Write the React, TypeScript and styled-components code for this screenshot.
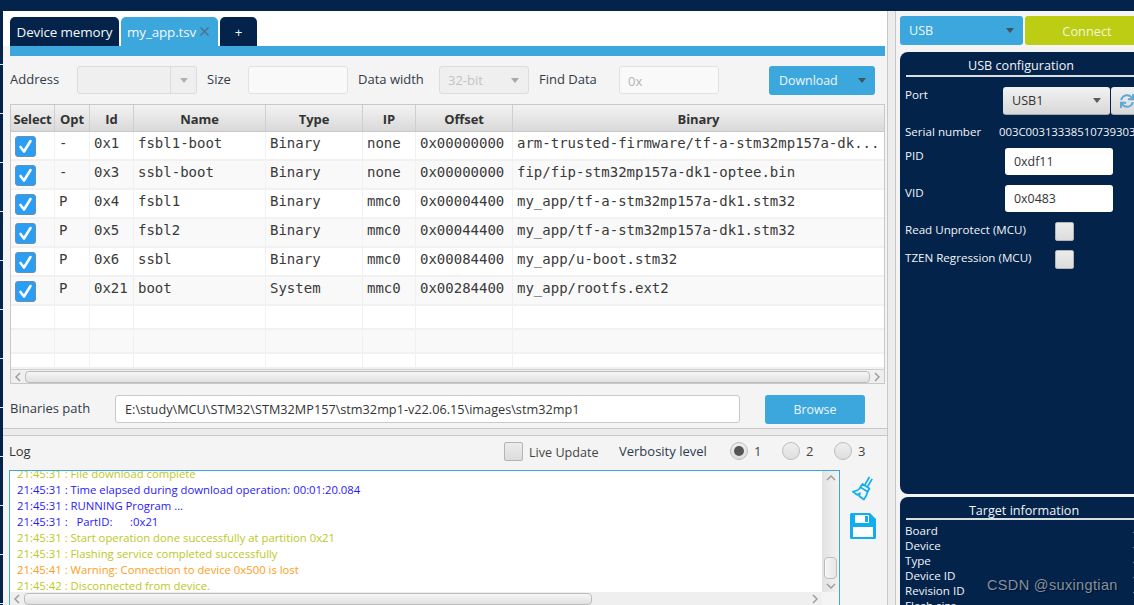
import React from "react";
import styled, { createGlobalStyle } from "styled-components";
import { FaSync } from "react-icons/fa";

const NAVY = "#03234b";
const BLUE = "#3ba7dc";
const UI = `"Open Sans", "Noto Sans", sans-serif`;
const MONO = `"DejaVu Sans Mono", "Liberation Mono", monospace`;

const Global = createGlobalStyle`
  html, body { margin: 0; padding: 0; overflow: hidden; background: ${NAVY}; }
  * { box-sizing: border-box; }
`;

const Root = styled.div`
  width: 1134px; height: 605px; overflow: hidden; position: relative;
  display: flex; flex-direction: column; background: ${NAVY};
  font-family: ${UI}; font-size: 13px; color: #333;
`;
const TopBar = styled.div`height: 11px; flex: none; background: ${NAVY};`;
const Body = styled.div`flex: 1; min-height: 0; display: flex;`;
const LeftStrip = styled.div`
  width: 3px; flex: none;
  background: repeating-linear-gradient(to bottom, ${NAVY} 0 48px, #dfe6ee 48px 49px);
  background-position: 0 5px;
`;
const Main = styled.div`
  width: 884px; flex: none; display: flex; flex-direction: column;
  background: #f4f4f4; overflow: hidden;
`;
const TabHeader = styled.div`
  height: 35px; flex: none; background: #fff; padding: 6px 0 0 7px;
  display: flex; gap: 2px; align-items: flex-end;
`;
const Tab = styled.div<{ $w: number; $active?: boolean }>`
  width: ${(p) => p.$w}px; height: 29px; border-radius: 5px 5px 0 0;
  background: ${(p) => (p.$active ? BLUE : NAVY)}; color: #f4f8fb;
  font-size: 13.4px; display: flex; align-items: center; justify-content: ${(p) => (p.$active ? "flex-start" : "center")};
  padding-left: ${(p) => (p.$active ? 6 : 0)}px; gap: 3px; letter-spacing: -0.1px;
`;
const BlueBar = styled.div`height: 10px; flex: none; margin: 0 2px 0 7px; background: ${BLUE};`;
const Controls = styled.div`
  height: 29px; flex: none; margin: 10px 0 0 7px; display: flex; align-items: flex-start;
`;
const Label = styled.span<{ $w: number }>`
  width: ${(p) => p.$w}px; flex: none; height: 27px; line-height: 26px; font-size: 13px; color: #333a45;
`;
const Combo = styled.div<{ $w: number; $mr: number }>`
  width: ${(p) => p.$w}px; height: 28px; margin-right: ${(p) => p.$mr}px; flex: none;
  border: 1px solid #dcdcdc; border-radius: 3px; background: #efefef; color: #c4c4c4;
  display: flex; align-items: center; justify-content: space-between; padding-left: 8px; font-size: 13px;
`;
const ArrowCell = styled.div<{ $line?: boolean }>`
  width: 26px; height: 100%; display: flex; align-items: center; justify-content: center;
  border-left: ${(p) => (p.$line ? "1px solid #dcdcdc" : "none")};
`;
const Arrow = styled.i<{ $c: string }>`
  display: block; width: 0; height: 0; border-left: 4.5px solid transparent; border-right: 4.5px solid transparent;
  border-top: 5px solid ${(p) => p.$c};
`;
const Input = styled.div<{ $w: number; $mr: number }>`
  width: ${(p) => p.$w}px; height: 28px; margin-right: ${(p) => p.$mr}px; flex: none;
  background: #f9f9f9; border: 1px solid #e2e2e2; border-radius: 3px; padding-left: 8px;
  line-height: 28px; color: #b4b4b4; font-size: 13px;
`;
const BlueButton = styled.div<{ $w: number }>`
  width: ${(p) => p.$w}px; height: 29px; flex: none; background: ${BLUE}; color: #eef7fc; border-radius: 3px;
  display: flex; align-items: center; font-size: 12.4px;
`;
const DownloadText = styled.span`flex: 1; padding-left: 10px;`;
const Table = styled.div`
  height: 280px; flex: none; margin: 9px 2px 0 7px; border: 1px solid #c8c8c8;
  display: flex; flex-direction: column; background: #fff; overflow: hidden;
`;
const COLS = "43px 34px 43px 131px 96px 52px 96px 371px";
const HeadRow = styled.div`
  height: 27px; flex: none; display: grid; grid-template-columns: ${COLS}; column-gap: 1px;
  border-bottom: 1px solid #c8c8c8; background: #cfcfcf;
`;
const HeadCell = styled.div`
  background: linear-gradient(#f3f3f3, #d9d9d9); display: flex; align-items: center; justify-content: center;
  font-weight: 700; font-size: 13px; color: #333; letter-spacing: -0.1px; padding-top: 2px;
`;
const Row = styled.div<{ $h: number; $alt?: boolean }>`
  height: ${(p) => p.$h}px; flex: none; display: grid; grid-template-columns: ${COLS}; column-gap: 1px;
  background: ${(p) => (p.$alt ? "#f9f9f9" : "#fff")}; border-bottom: 2px solid #f1f1f1;
`;
const Cell = styled.div`
  border-right: 1px solid #f1f1f1; margin-right: -1px; padding: 0 4px; font-family: ${MONO}; font-size: 14px;
  line-height: 22px; color: #3a3a3a; white-space: nowrap; overflow: hidden;
`;
const CheckCell = styled.div`
  border-right: 1px solid #f1f1f1; margin-right: -1px; padding: 4px 0 0 4px;
`;
const Check = styled.div`
  width: 21px; height: 21px; border-radius: 3px; background: #2a9df4; border: 1px solid #6b90ac;
  display: flex; align-items: center; justify-content: center;
`;
const HScroll = styled.div`
  height: 15px; flex: none; background: #efefef; border-top: 1px solid #d0d0d0; display: flex; align-items: center;
`;
const ScrollEnd = styled.div`
  width: 14px; flex: none; display: flex; align-items: center; justify-content: center; color: #9a9a9a;
`;
const HThumb = styled.div<{ $w?: number }>`
  ${(p) => (p.$w ? `width: ${p.$w}px; flex: none;` : "flex: 1;")} height: 12px; border: 1px solid #bdbdbd; border-radius: 4px;
  background: linear-gradient(#f6f6f6, #e0e0e0);
`;
const PathRow = styled.div`
  height: 29px; flex: none; margin: 11px 0 0 7px; display: flex; align-items: flex-start;
`;
const PathInput = styled.div`
  width: 625px; height: 28px; flex: none; margin-right: 25px; background: #fff; border: 1px solid #c9c9c9; border-radius: 3px;
  padding-left: 9px; line-height: 27px; font-size: 12.7px; color: #333; white-space: nowrap; overflow: hidden;
`;
const BrowseButton = styled(BlueButton)`justify-content: center;`;
const Splitter = styled.div`
  height: 8px; flex: none; margin-top: 4px; background: #ececec; border-top: 1px solid #c8c8c8; border-bottom: 1px solid #c8c8c8;
`;
const LogHeader = styled.div`
  height: 34px; flex: none; display: flex; align-items: center; padding: 0 0 4px 6px; font-size: 13px;
`;
const LogTitle = styled.span`width: 495px; flex: none; color: #333;`;
const SquareBox = styled.div<{ $mr?: number }>`
  width: 19px; height: 19px; flex: none; border: 1px solid #b4b4b4; border-radius: 2px; margin-right: ${(p) => p.$mr ?? 0}px;
  background: linear-gradient(#ececec, #dcdcdc);
`;
const LiveText = styled.span`width: 90px; flex: none; font-size: 12.6px; color: #444; padding-top: 2px;`;
const VerbText = styled.span`width: 111px; flex: none; color: #2c3a4e;`;
const RadioItem = styled.div`width: 52px; flex: none; display: flex; align-items: center; gap: 6px; font-size: 13px; color: #444;`;
const Radio = styled.div`
  width: 18px; height: 18px; border-radius: 50%; border: 1px solid #bcbcbc; background: linear-gradient(#efefef, #dedede);
  display: flex; align-items: center; justify-content: center;
`;
const RadioDot = styled.div`width: 10px; height: 10px; border-radius: 50%; background: #555;`;
const LogBody = styled.div`flex: 1; min-height: 0; display: flex; padding-left: 6px;`;
const LogBox = styled.div`
  width: 831px; flex: none; height: 145px; border: 1px solid ${BLUE}; background: #fff;
  display: grid; grid-template-columns: 1fr 17px; grid-template-rows: 121px 13px;
`;
const LogLines = styled.div`
  overflow: hidden; display: flex; flex-direction: column; justify-content: flex-end; padding-left: 7px;
  font-size: 11.3px; white-space: pre;
`;
const LogLine = styled.div<{ $c: string }>`color: ${(p) => p.$c}; flex: none; height: 16px; line-height: 20px;`;
const VScroll = styled.div`
  background: linear-gradient(to right, #e2e2e2, #f2f2f2); display: flex; flex-direction: column; align-items: center;
`;
const VEnd = styled.div`height: 13px; flex: none; display: flex; align-items: center; justify-content: center; color: #9a9a9a;`;
const VGap = styled.div`flex: 1;`;
const VThumb = styled.div`
  width: 13px; height: 22px; flex: none; border: 1px solid #bdbdbd; border-radius: 4px; background: linear-gradient(to right, #f6f6f6, #e6e6e6);
`;
const LogScroll = styled(HScroll)`height: 13px; grid-column: 1; border-top: none;`;
const CornerFill = styled.div`background: #f4f4f4;`;
const ToolIcons = styled.div`
  width: 40px; flex: none; padding: 6px 0 0 10px; display: flex; flex-direction: column; gap: 12px;
`;
const BroomWrap = styled.div`height: 25px; margin-left: 2px; display: flex;`;
const Divider = styled.div`
  width: 9px; flex: none; background: #ececec; border-left: 1px solid #c8c8c8; border-right: 1px solid #c8c8c8;
`;
const Side = styled.div`
  width: 247px; flex: none; background: #f4f4f4; padding: 5px 0 0 4px; display: flex; flex-direction: column;
`;
const SideTop = styled.div`height: 29px; flex: none; display: flex; gap: 2px;`;
const SideCombo = styled.div`
  width: 123px; flex: none; height: 29px; border-radius: 3px; background: ${BLUE}; color: #eef7fc; padding: 0 9px;
  display: flex; align-items: center; justify-content: space-between; font-size: 12.6px;
`;
const ConnectBtn = styled.div`
  width: 124px; flex: none; height: 29px; border-radius: 3px 0 0 3px; background: #bccd14; color: #f3f6d8; font-size: 12.8px;
  display: flex; align-items: center; justify-content: center;
`;
const Panel = styled.div<{ $w: number; $h: number; $mt: number }>`
  width: ${(p) => p.$w}px; height: ${(p) => p.$h}px; flex: none; margin-top: ${(p) => p.$mt}px;
  background: ${NAVY}; border-radius: 8px 0 0 8px; color: #f1f4f7; padding: 6px 6px 0 6px;
`;
const PanelTitle = styled.div<{ $h: number }>`
  height: ${(p) => p.$h}px; border-bottom: 2px solid #d9dde2; text-align: center; line-height: 16px; font-size: 12.6px;
`;
const Form = styled.div`padding-top: 10px;`;
const FormRow = styled.div<{ $h: number }>`height: ${(p) => p.$h}px; display: flex; align-items: flex-start; white-space: nowrap;`;
const FormLabel = styled.div<{ $w: number }>`
  width: ${(p) => p.$w}px; flex: none; line-height: 16px; font-size: 11.6px; margin-left: -1px;
`;
const PortCombo = styled.div`
  width: 107px; height: 28px; flex: none; border-radius: 3px; background: linear-gradient(#f2f2f2, #d8d8d8); color: #333;
  border-bottom: 1px solid #aaa; display: flex; align-items: center; justify-content: space-between; padding: 0 9px; font-size: 12.6px;
`;
const RefreshBtn = styled.div`
  width: 40px; height: 28px; flex: none; margin-left: 1px; border-radius: 3px; background: linear-gradient(#f2f2f2, #d8d8d8);
  border-bottom: 1px solid #aaa; padding: 7px 0 0 9px; color: #5aa9d6; font-size: 14px; display: flex;
`;
const Serial = styled.span`font-size: 11.4px; line-height: 16px; letter-spacing: -0.05px;`;
const Field = styled.div`
  width: 108px; height: 27px; flex: none; background: #fff; border-radius: 3px; color: #333; padding-left: 9px; line-height: 28px; font-size: 12.4px;
`;
const InfoList = styled.div`padding-top: 3px;`;
const InfoRow = styled.div`
  height: 15px; display: flex; line-height: 15px; font-size: 11.6px; white-space: nowrap; margin-left: -1px;
`;
const InfoLabel = styled.span`width: 228px; flex: none;`;
const Watermark = styled.div`
  position: absolute; left: 987px; top: 577px; font-family: "Liberation Sans", sans-serif; font-size: 14.5px;
  color: #87919f; text-shadow: 1px 1px 1px rgba(0, 0, 0, 0.5); letter-spacing: 0.35px; white-space: nowrap;
`;

const Chevron = ({ d }: { d: "l" | "r" | "u" | "d" }) => {
  const paths = { l: "M6 1 L2 5 L6 9", r: "M2 1 L6 5 L2 9", u: "M1 6 L5 2 L9 6", d: "M1 2 L5 6 L9 2" };
  const vertical = d === "u" || d === "d";
  return (
    <svg width={vertical ? 10 : 8} height={vertical ? 8 : 10} viewBox={vertical ? "0 0 10 8" : "0 0 8 10"} fill="none" stroke="currentColor" strokeWidth="1.4">
      <path d={paths[d]} />
    </svg>
  );
};

const Tick = () => (
  <svg width="15" height="15" viewBox="0 0 15 15" fill="none" stroke="#fff" strokeWidth="2.6" strokeLinecap="round" strokeLinejoin="round">
    <path d="M2.5 8 L6 12.5 L12.5 2" />
  </svg>
);

const CloseX = () => (
  <svg width="11" height="11" viewBox="0 0 11 11" fill="none" stroke="#4f6f84" strokeWidth="1.3">
    <path d="M1.5 1.5 L9.5 9.5 M9.5 1.5 L1.5 9.5" />
  </svg>
);

const Broom = () => (
  <svg width="22" height="25" viewBox="0 0 24 26" fill="none" stroke="#10aef0" strokeWidth="1.9" strokeLinejoin="round">
    <path d="M19 0.5 L14 9 M22 2.5 L17 11" />
    <path d="M11.5 8 L19 13 L17 16.5 L9 11.5 Z" />
    <path d="M9.5 11.5 C8 14 4 16 1 16.5 L6 20 L8.5 18 L8 21.5 L13 25 C15 22.5 16.5 19.5 17 16.5" />
  </svg>
);

const Floppy = () => (
  <svg width="26" height="26" viewBox="0 0 26 26">
    <path fill="#10aef0" d="M1.5 0 H20 L26 6 V24.5 A1.5 1.5 0 0 1 24.5 26 H1.5 A1.5 1.5 0 0 1 0 24.5 V1.5 A1.5 1.5 0 0 1 1.5 0 Z" />
    <rect x="5" y="2" width="14" height="8" rx="1" fill="#fff" />
    <rect x="15" y="3" width="3" height="6" fill="#10aef0" />
    <rect x="3" y="14" width="20" height="10" fill="#fff" />
  </svg>
);

const columns = ["Select", "Opt", "Id", "Name", "Type", "IP", "Offset", "Binary"];
const rows = [
  ["-", "0x1", "fsbl1-boot", "Binary", "none", "0x00000000", "arm-trusted-firmware/tf-a-stm32mp157a-dk..."],
  ["-", "0x3", "ssbl-boot", "Binary", "none", "0x00000000", "fip/fip-stm32mp157a-dk1-optee.bin"],
  ["P", "0x4", "fsbl1", "Binary", "mmc0", "0x00004400", "my_app/tf-a-stm32mp157a-dk1.stm32"],
  ["P", "0x5", "fsbl2", "Binary", "mmc0", "0x00044400", "my_app/tf-a-stm32mp157a-dk1.stm32"],
  ["P", "0x6", "ssbl", "Binary", "mmc0", "0x00084400", "my_app/u-boot.stm32"],
  ["P", "0x21", "boot", "System", "mmc0", "0x00284400", "my_app/rootfs.ext2"],
];
const emptyCells = Array.from({ length: 8 });

const GREEN = "#bcc81e";
const INFO = "#2a18ff";
const ORANGE = "#ff9d20";
const logs: [string, string][] = [
  [GREEN, "21:45:31 : File download complete"],
  [INFO, "21:45:31 : Time elapsed during download operation: 00:01:20.084"],
  [INFO, "21:45:31 : RUNNING Program ..."],
  [INFO, "21:45:31 :   PartID:      :0x21"],
  [GREEN, "21:45:31 : Start operation done successfully at partition 0x21"],
  [GREEN, "21:45:31 : Flashing service completed successfully"],
  [ORANGE, "21:45:41 : Warning: Connection to device 0x500 is lost"],
  [GREEN, "21:45:42 : Disconnected from device."],
];
const info = ["Board", "Device", "Type", "Device ID", "Revision ID", "Flash size"];

export default function App() {
  return (
    <Root>
      <Global />
      <TopBar />
      <Body>
        <LeftStrip />
        <Main>
          <TabHeader>
            <Tab $w={109}>Device memory</Tab>
            <Tab $w={97} $active>my_app.tsv<CloseX /></Tab>
            <Tab $w={37}>+</Tab>
          </TabHeader>
          <BlueBar />
          <Controls>
            <Label $w={67}>Address</Label>
            <Combo $w={120} $mr={10}><span /><ArrowCell $line><Arrow $c="#b0b0b0" /></ArrowCell></Combo>
            <Label $w={41}>Size</Label>
            <Input $w={100} $mr={10} />
            <Label $w={81}>Data width</Label>
            <Combo $w={90} $mr={10}>32-bit<ArrowCell><Arrow $c="#a8a8a8" /></ArrowCell></Combo>
            <Label $w={80}>Find Data</Label>
            <Input $w={100} $mr={50}>0x</Input>
            <BlueButton $w={106}><DownloadText>Download</DownloadText><ArrowCell><Arrow $c="#3d5564" /></ArrowCell></BlueButton>
          </Controls>
          <Table>
            <HeadRow>{columns.map((c) => <HeadCell key={c}>{c}</HeadCell>)}</HeadRow>
            {rows.map((r, i) => (
              <Row key={r[1]} $h={29} $alt={i % 2 === 1}>
                <CheckCell><Check><Tick /></Check></CheckCell>
                {r.map((v, j) => <Cell key={j}>{v}</Cell>)}
              </Row>
            ))}
            <Row $h={24}>{emptyCells.map((_, i) => <Cell key={i} />)}</Row>
            <Row $h={24} $alt>{emptyCells.map((_, i) => <Cell key={i} />)}</Row>
            <Row $h={15}>{emptyCells.map((_, i) => <Cell key={i} />)}</Row>
            <HScroll>
              <ScrollEnd><Chevron d="l" /></ScrollEnd>
              <HThumb />
              <ScrollEnd><Chevron d="r" /></ScrollEnd>
            </HScroll>
          </Table>
          <PathRow>
            <Label $w={105}>Binaries path</Label>
            <PathInput>{"E:\\study\\MCU\\STM32\\STM32MP157\\stm32mp1-v22.06.15\\images\\stm32mp1"}</PathInput>
            <BrowseButton $w={100}>Browse</BrowseButton>
          </PathRow>
          <Splitter />
          <LogHeader>
            <LogTitle>Log</LogTitle>
            <SquareBox $mr={6} />
            <LiveText>Live Update</LiveText>
            <VerbText>Verbosity level</VerbText>
            <RadioItem><Radio><RadioDot /></Radio>1</RadioItem>
            <RadioItem><Radio />2</RadioItem>
            <RadioItem><Radio />3</RadioItem>
          </LogHeader>
          <LogBody>
            <LogBox>
              <LogLines>
                {logs.map(([c, t]) => <LogLine key={t} $c={c}>{t}</LogLine>)}
              </LogLines>
              <VScroll>
                <VEnd><Chevron d="u" /></VEnd>
                <VGap />
                <VThumb />
                <VEnd><Chevron d="d" /></VEnd>
              </VScroll>
              <LogScroll>
                <ScrollEnd><Chevron d="l" /></ScrollEnd>
                <HThumb $w={568} />
                <VGap />
                <ScrollEnd><Chevron d="r" /></ScrollEnd>
              </LogScroll>
              <CornerFill />
            </LogBox>
            <ToolIcons><BroomWrap><Broom /></BroomWrap><Floppy /></ToolIcons>
          </LogBody>
        </Main>
        <Divider />
        <Side>
          <SideTop>
            <SideCombo>USB<Arrow $c="#3d5564" /></SideCombo>
            <ConnectBtn>Connect</ConnectBtn>
          </SideTop>
          <Panel $w={242} $h={442} $mt={7}>
            <PanelTitle $h={19}>USB configuration</PanelTitle>
            <Form>
              <FormRow $h={37}>
                <FormLabel $w={98}>Port</FormLabel>
                <PortCombo>USB1<Arrow $c="#5a5a5a" /></PortCombo>
                <RefreshBtn><FaSync /></RefreshBtn>
              </FormRow>
              <FormRow $h={24}>
                <FormLabel $w={94}>Serial number</FormLabel>
                <Serial>003C00313338510739303</Serial>
              </FormRow>
              <FormRow $h={37}>
                <FormLabel $w={100}>PID</FormLabel>
                <Field>0xdf11</Field>
              </FormRow>
              <FormRow $h={37}>
                <FormLabel $w={100}>VID</FormLabel>
                <Field>0x0483</Field>
              </FormRow>
              <FormRow $h={28}>
                <FormLabel $w={150}>Read Unprotect (MCU)</FormLabel>
                <SquareBox />
              </FormRow>
              <FormRow $h={28}>
                <FormLabel $w={150}>TZEN Regression (MCU)</FormLabel>
                <SquareBox />
              </FormRow>
            </Form>
          </Panel>
          <Panel $w={248} $h={120} $mt={3}>
            <PanelTitle $h={17}>Target information</PanelTitle>
            <InfoList>
              {info.map((t) => (
                <InfoRow key={t}><InfoLabel>{t}</InfoLabel>-</InfoRow>
              ))}
            </InfoList>
          </Panel>
        </Side>
      </Body>
      <Watermark>CSDN @suxingtian</Watermark>
    </Root>
  );
}
